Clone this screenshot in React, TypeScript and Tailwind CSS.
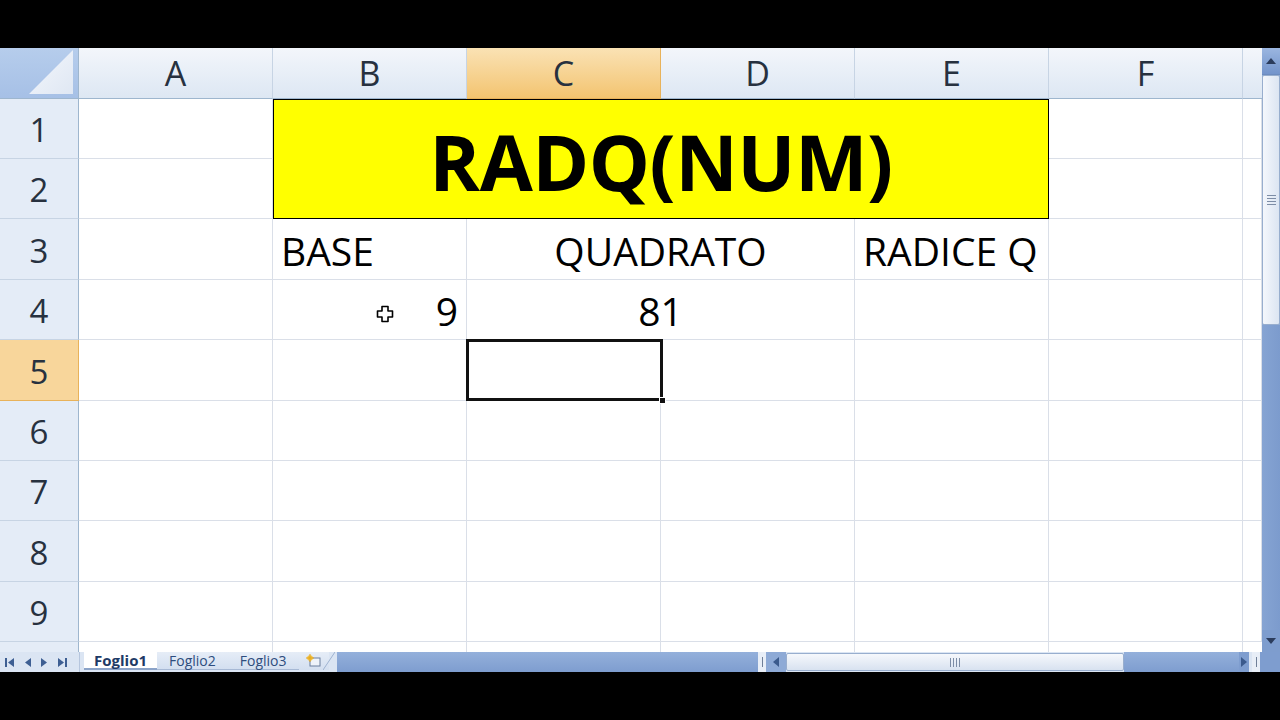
import React from "react"

const font = { fontFamily: '"Open Sans", "Noto Sans", sans-serif' }

const COLS = ["A", "B", "C", "D", "E", "F"]
const ROW_H = [60, 60, 61, 60, 61, 60, 60, 61, 60]

function ColHeader({ label, active }: { label: string; active?: boolean }) {
  return (
    <div
      className={
        active
          ? "flex items-center justify-center border-r border-b border-[#e8b25a] bg-gradient-to-b from-[#fae2b4] to-[#f3c46f] text-[34px] text-[#27313f]"
          : "flex items-center justify-center border-r border-b border-r-[#c7d4e4] border-b-[#9eb6ce] bg-gradient-to-b from-[#f3f6fb] to-[#dde7f3] text-[34px] text-[#27313f]"
      }
    >
      {label}
    </div>
  )
}

function RowHeader({ n, active }: { n: number; active?: boolean }) {
  return (
    <div
      className={
        active
          ? "flex items-center justify-center border-r border-b border-[#e8b25a] bg-[#f8d69b] pt-[3px] text-[33px] text-[#27313f]"
          : "flex items-center justify-center border-r border-b border-r-[#9eb6ce] border-b-[#c7d4e4] bg-[#e4ecf7] pt-[3px] text-[33px] text-[#27313f]"
      }
    >
      {n}
    </div>
  )
}

function Cell({ children, className = "" }: { children?: React.ReactNode; className?: string }) {
  return <div className={"border-r border-b border-[#dadfe8] bg-white " + className}>{children}</div>
}

function PlusCursor() {
  return (
    <svg width="18" height="18" viewBox="0 0 18 18" className="absolute left-[376px] top-[305px]">
      <path
        d="M6 1.5h6v4.5h4.5v6H12v4.5H6V12H1.5V6H6z"
        fill="white"
        stroke="black"
        strokeWidth="1.6"
        strokeLinejoin="round"
      />
    </svg>
  )
}

function VScroll() {
  return (
    <div className="flex h-[604px] w-[18px] flex-col bg-[#8eacd8]">
      <div className="flex h-[27px] items-center justify-center border-b border-[#6d8cbf] bg-gradient-to-b from-[#9bb6e0] to-[#7394cb]">
        <svg width="10" height="6" viewBox="0 0 10 6">
          <path d="M0 6 5 0 10 6z" fill="#2b3c5c" />
        </svg>
      </div>
      <div className="flex h-[250px] items-center justify-center rounded-[2px] border border-[#98aece] bg-gradient-to-r from-[#f4f7fc] to-[#dce5f2]">
        <div className="flex flex-col gap-[2px]">
          <div className="h-px w-[9px] bg-[#7d8da6]" />
          <div className="h-px w-[9px] bg-[#7d8da6]" />
          <div className="h-px w-[9px] bg-[#7d8da6]" />
          <div className="h-px w-[9px] bg-[#7d8da6]" />
        </div>
      </div>
      <div className="flex-1 bg-gradient-to-r from-[#86a4d3] to-[#7c9bcd]" />
      <div className="flex h-[22px] items-center justify-center bg-[#7e9dce]">
        <svg width="10" height="6" viewBox="0 0 10 6">
          <path d="M0 0 5 6 10 0z" fill="#2b3c5c" />
        </svg>
      </div>
    </div>
  )
}

function Slant() {
  return (
    <svg width="12" height="18" viewBox="0 0 12 18" className="-mx-[6px] shrink-0">
      <path d="M0 18 12 0" stroke="#9fb3d1" strokeWidth="1" />
    </svg>
  )
}

function Tab({ label, active }: { label: string; active?: boolean }) {
  return (
    <div
      className={
        active
          ? "relative flex h-[18px] items-center border-b-2 border-[#8ba3c8] bg-white px-[10px] text-[15px] font-bold text-[#1e3a66]"
          : "relative flex h-[18px] items-center border-b border-[#a7b9d5] bg-gradient-to-b from-[#e6edf7] to-[#d3dff0] px-[12px] text-[14px] text-[#2e4d7e]"
      }
    >
      {label}
    </div>
  )
}

function BottomBar() {
  return (
    <div className="flex h-[20px] w-[1280px] items-start bg-[#dbe5f3]">
      <div className="flex h-[20px] w-[80px] items-center gap-[10px] pl-[5px] border-r border-[#b6c6de]">
        <svg width="9" height="9" viewBox="0 0 9 9"><path d="M0 0h2v9H0zM9 0 3 4.5 9 9z" fill="#3e5f93" /></svg>
        <svg width="7" height="9" viewBox="0 0 7 9"><path d="M7 0 1 4.5 7 9z" fill="#3e5f93" /></svg>
        <svg width="7" height="9" viewBox="0 0 7 9"><path d="M0 0 6 4.5 0 9z" fill="#3e5f93" /></svg>
        <svg width="9" height="9" viewBox="0 0 9 9"><path d="M0 0 6 4.5 0 9zM7 0h2v9H7z" fill="#3e5f93" /></svg>
      </div>
      <div className="flex items-start pl-[4px]">
        <Tab label="Foglio1" active />
        <Slant />
        <Tab label="Foglio2" />
        <Slant />
        <Tab label="Foglio3" />
        <Slant />
        <div className="flex h-[18px] w-[30px] items-center justify-center bg-gradient-to-b from-[#e6edf7] to-[#d3dff0]">
          <svg width="16" height="14" viewBox="0 0 16 14">
            <rect x="4" y="4" width="10" height="8" fill="#eef3fa" stroke="#6b7f9e" />
            <circle cx="4" cy="4" r="2.8" fill="#f3c240" />
            <path d="M4 0v8M0 4h8" stroke="#e3a51c" strokeWidth="1" />
          </svg>
        </div>
        <Slant />
      </div>
      <div className="ml-[8px] h-[20px] flex-1 bg-gradient-to-b from-[#94b0db] to-[#7e9dcf]" />
      <div className="flex h-[20px] items-center">
        <div className="flex h-[20px] w-[8px] items-center justify-center bg-[#e8eef7]">
          <div className="h-[10px] w-px bg-[#6f7f98]" />
        </div>
        <div className="flex h-[20px] w-[20px] items-center justify-center bg-[#8eaad6]">
          <svg width="6" height="10" viewBox="0 0 6 10"><path d="M6 0 0 5 6 10z" fill="#3b5a8c" /></svg>
        </div>
        <div className="flex h-[18px] w-[338px] items-center justify-center rounded-[2px] border border-[#98aece] bg-gradient-to-b from-[#f6f8fc] to-[#d8e2f0]">
          <div className="flex gap-[2px]">
            <div className="h-[9px] w-px bg-[#7d8da6]" />
            <div className="h-[9px] w-px bg-[#7d8da6]" />
            <div className="h-[9px] w-px bg-[#7d8da6]" />
            <div className="h-[9px] w-px bg-[#7d8da6]" />
          </div>
        </div>
        <div className="h-[20px] w-[115px] bg-gradient-to-b from-[#94b0db] to-[#7e9dcf]" />
        <div className="flex h-[20px] w-[10px] items-center justify-center bg-[#7e9dcf]">
          <svg width="6" height="10" viewBox="0 0 6 10"><path d="M0 0 6 5 0 10z" fill="#3b5a8c" /></svg>
        </div>
        <div className="ml-[3px] flex h-[20px] w-[8px] items-center justify-center bg-[#e8eef7]">
          <div className="h-[10px] w-px bg-[#6f7f98]" />
        </div>
        <div className="h-[20px] w-[20px] bg-[#7e9dcf]" />
      </div>
    </div>
  )
}

export default function App() {
  return (
    <div className="relative h-[720px] w-[1280px] overflow-hidden bg-black" style={font}>
      <div className="h-[48px]" />
      <div className="flex">
        <div className="relative grid w-[1262px] grid-cols-[79px_repeat(6,194px)_19px] grid-rows-[51px_60px_60px_61px_60px_61px_60px_60px_61px_60px_10px] overflow-hidden bg-white">
          {/* corner */}
          <div className="relative border-r border-b border-[#9eb6ce] bg-gradient-to-b from-[#b6cdec] to-[#a6c0e6]">
            <svg className="absolute right-[5px] bottom-[4px]" width="44" height="44" viewBox="0 0 44 44">
              <defs>
                <linearGradient id="cg" x1="0" y1="0" x2="1" y2="1">
                  <stop offset="0" stopColor="#f4f7fc" />
                  <stop offset="1" stopColor="#dfe7f3" />
                </linearGradient>
              </defs>
              <path d="M44 0V44H0z" fill="url(#cg)" />
            </svg>
          </div>
          {COLS.map((c) => (
            <ColHeader key={c} label={c} active={c === "C"} />
          ))}
          <div className="border-b border-[#9eb6ce] bg-gradient-to-b from-[#f3f6fb] to-[#dde7f3]" />

          {/* rows 1-2 */}
          <RowHeader n={1} />
          <Cell />
          <div className="col-span-4 row-span-2 flex items-center justify-center border border-black bg-[#ffff00] pt-[6px] text-[77px] font-bold tracking-[-0.5px] text-black">
            RADQ(NUM)
          </div>
          <Cell />
          <Cell />
          <RowHeader n={2} />
          <Cell />
          <Cell />
          <Cell />

          {/* row 3 */}
          <RowHeader n={3} />
          <Cell />
          <Cell className="flex items-center pl-[8px] pt-[4px] text-[39px] text-black">BASE</Cell>
          <Cell className="col-span-2 flex items-center justify-center pt-[4px] text-[39px] text-black">QUADRATO</Cell>
          <Cell className="flex items-center pl-[8px] pt-[4px] text-[39px] text-black">RADICE Q</Cell>
          <Cell />
          <Cell />

          {/* row 4 */}
          <RowHeader n={4} />
          <Cell />
          <Cell className="flex items-center justify-end pr-[8px] pt-[4px] text-[39px] text-black">9</Cell>
          <Cell className="col-span-2 flex items-center justify-center pt-[4px] text-[39px] text-black">81</Cell>
          <Cell />
          <Cell />
          <Cell />

          {ROW_H.slice(4).map((_, i) => {
            const n = i + 5
            return (
              <React.Fragment key={n}>
                <RowHeader n={n} active={n === 5} />
                {COLS.map((c) => (
                  <Cell key={c} />
                ))}
                <Cell />
              </React.Fragment>
            )
          })}

          {/* partial row 10 */}
          <div className="border-r border-[#9eb6ce] bg-[#e4ecf7]" />
          {COLS.map((c) => (
            <div key={c} className="border-r border-[#dadfe8] bg-white" />
          ))}
          <div className="bg-white" />

          {/* selection on C5 */}
          <div className="absolute left-[466px] top-[291px] h-[62px] w-[197px] border-[3px] border-[#111]" />
          <div className="absolute left-[659px] top-[349px] h-[7px] w-[7px] border border-white bg-[#111]" />
        </div>
        <VScroll />
      </div>
      <BottomBar />
      <PlusCursor />
    </div>
  )
}
